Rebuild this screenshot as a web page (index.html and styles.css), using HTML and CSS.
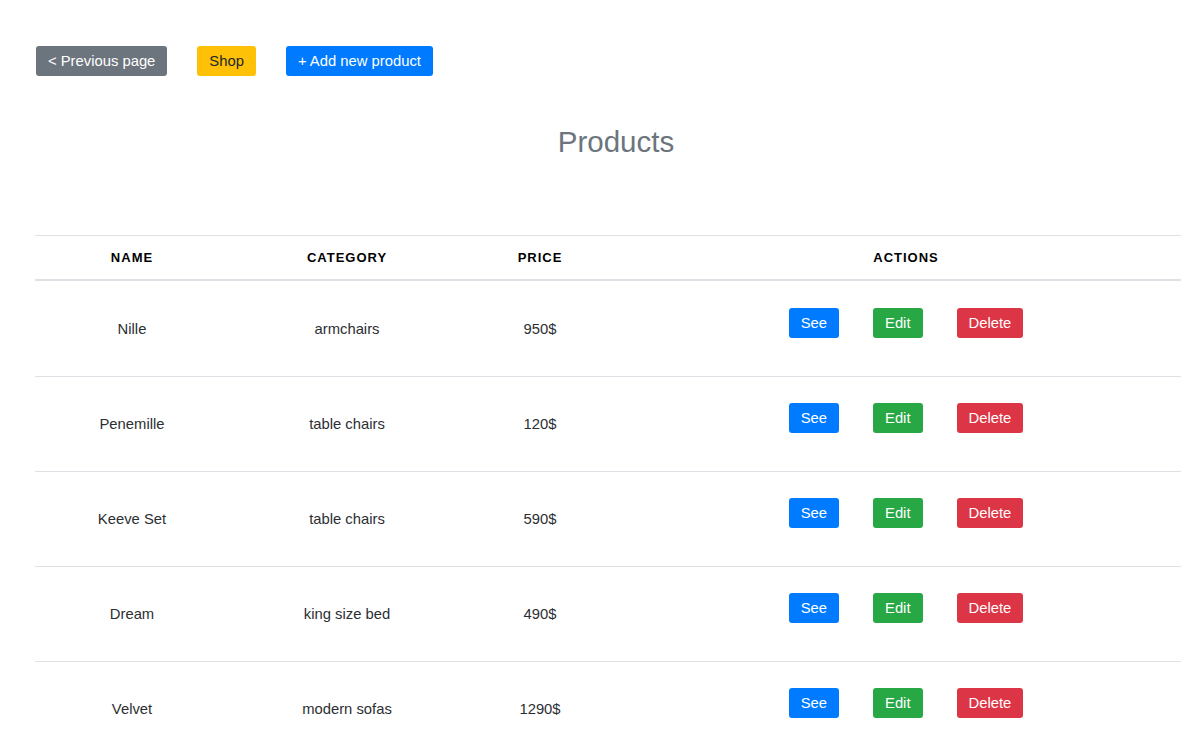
FILE: index.html
```html
<!DOCTYPE html>
<html lang="en">
<head>
    <meta charset="UTF-8">
    <meta name="viewport" content="width=device-width, initial-scale=1.0">
    <title>Products</title>
    <link rel="stylesheet" href="styles.css">
</head>
<body>
    <div class="page">
        <div class="top-bar">
            <a class="btn btn-gray" href="#">&lt; Previous page</a>
            <a class="btn btn-yellow" href="#">Shop</a>
            <a class="btn btn-blue" href="#">+ Add new product</a>
        </div>

        <h1 class="title">Products</h1>

        <table class="products">
            <colgroup>
                <col class="col-name">
                <col class="col-category">
                <col class="col-price">
                <col class="col-actions">
            </colgroup>
            <thead>
                <tr>
                    <th>Name</th>
                    <th>Category</th>
                    <th>Price</th>
                    <th>Actions</th>
                </tr>
            </thead>
            <tbody>
                <tr>
                    <td>Nille</td>
                    <td>armchairs</td>
                    <td>950$</td>
                    <td>
                        <div class="actions">
                            <a class="btn btn-blue" href="#">See</a>
                            <a class="btn btn-green" href="#">Edit</a>
                            <a class="btn btn-red" href="#">Delete</a>
                        </div>
                    </td>
                </tr>
                <tr>
                    <td>Penemille</td>
                    <td>table chairs</td>
                    <td>120$</td>
                    <td>
                        <div class="actions">
                            <a class="btn btn-blue" href="#">See</a>
                            <a class="btn btn-green" href="#">Edit</a>
                            <a class="btn btn-red" href="#">Delete</a>
                        </div>
                    </td>
                </tr>
                <tr>
                    <td>Keeve Set</td>
                    <td>table chairs</td>
                    <td>590$</td>
                    <td>
                        <div class="actions">
                            <a class="btn btn-blue" href="#">See</a>
                            <a class="btn btn-green" href="#">Edit</a>
                            <a class="btn btn-red" href="#">Delete</a>
                        </div>
                    </td>
                </tr>
                <tr>
                    <td>Dream</td>
                    <td>king size bed</td>
                    <td>490$</td>
                    <td>
                        <div class="actions">
                            <a class="btn btn-blue" href="#">See</a>
                            <a class="btn btn-green" href="#">Edit</a>
                            <a class="btn btn-red" href="#">Delete</a>
                        </div>
                    </td>
                </tr>
                <tr>
                    <td>Velvet</td>
                    <td>modern sofas</td>
                    <td>1290$</td>
                    <td>
                        <div class="actions">
                            <a class="btn btn-blue" href="#">See</a>
                            <a class="btn btn-green" href="#">Edit</a>
                            <a class="btn btn-red" href="#">Delete</a>
                        </div>
                    </td>
                </tr>
            </tbody>
        </table>
    </div>
</body>
</html>
```

FILE: styles.css
```css
body {
    margin: 0;
    font-family: "Liberation Sans", Arial, sans-serif;
    color: #212529;
    background-color: #fff;
    overflow: hidden;
}
.page {
    padding: 46px 0 0 35px;
}
.top-bar {
    display: flex;
    gap: 30px;
    padding-left: 1px;
}
.btn {
    display: inline-block;
    height: 30px;
    line-height: 30px;
    padding: 0 12px;
    font-size: 14.8px;
    color: #fff;
    text-decoration: none;
    border-radius: 3px;
    box-sizing: border-box;
    white-space: nowrap;
}
.btn-gray {
    background-color: #6c757d;
}
.btn-yellow {
    background-color: #ffc107;
    color: #212529;
}
.btn-blue {
    background-color: #007bff;
}
.btn-green {
    background-color: #28a745;
}
.btn-red {
    background-color: #dc3545;
}
.title {
    margin: 49px 0 76px;
    text-align: center;
    font-size: 29.5px;
    line-height: 34px;
    font-weight: normal;
    color: #6c757d;
    width: 1162px;
}
.products {
    border-collapse: collapse;
    table-layout: fixed;
    width: 1162px;
}
.col-name {
    width: 194px;
}
.col-category {
    width: 236px;
}
.col-price {
    width: 150px;
}
.col-actions {
    width: 582px;
}
.products th {
    border-top: 1px solid #dee2e6;
    border-bottom: 2px solid #dee2e6;
    height: 43px;
    padding: 0;
    font-size: 13px;
    letter-spacing: 1px;
    text-transform: uppercase;
    color: #000;
    vertical-align: middle;
}
.products td {
    border-top: 1px solid #dee2e6;
    padding: 26px 0;
    text-align: center;
    vertical-align: middle;
    font-size: 14.8px;
    line-height: 20px;
    color: #2b2f33;
}
.products tbody tr:first-child td {
    border-top: none;
    padding-top: 27px;
}
.actions {
    display: flex;
    justify-content: center;
    gap: 34px;
    padding-bottom: 12px;
}
```
